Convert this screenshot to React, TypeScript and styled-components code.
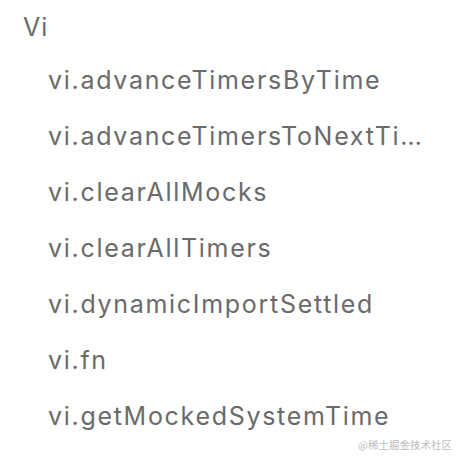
import styled, { createGlobalStyle } from 'styled-components';

const GlobalStyle = createGlobalStyle`
  html, body {
    margin: 0;
    padding: 0;
    background: #ffffff;
  }
  body {
    width: 464px;
    height: 456px;
    overflow: hidden;
    font-family: Inter, "Noto Sans", sans-serif;
    -webkit-font-smoothing: antialiased;
  }
`;

const Page = styled.div`
  position: relative;
  width: 464px;
  height: 456px;
  box-sizing: border-box;
  padding: 10px 0 0 23px;
`;

const Heading = styled.div`
  color: #6a6a6a;
  font-size: 25px;
  line-height: 34px;
  letter-spacing: 1px;
  font-weight: 400;
`;

const List = styled.ul`
  list-style: none;
  margin: 8px 0 0;
  padding: 0 0 0 25px;
  width: 378px;
`;

const Item = styled.li`
  color: #6a6a6a;
  font-size: 25px;
  line-height: 56px;
  letter-spacing: 1.7px;
  white-space: nowrap;
  overflow: hidden;
  text-overflow: ellipsis;
`;

const Watermark = styled.div`
  position: absolute;
  right: 12px;
  bottom: 4px;
  color: #bdbdbd;
  font-size: 10.5px;
  font-family: "Noto Sans CJK SC", sans-serif;
`;

const items = [
  'vi.advanceTimersByTime',
  'vi.advanceTimersToNextTimer',
  'vi.clearAllMocks',
  'vi.clearAllTimers',
  'vi.dynamicImportSettled',
  'vi.fn',
  'vi.getMockedSystemTime',
];

export default function App() {
  return (
    <>
      <GlobalStyle />
      <Page>
        <Heading>Vi</Heading>
        <List>
          {items.map((name) => (
            <Item key={name}>{name}</Item>
          ))}
        </List>
        <Watermark>@稀土掘金技术社区</Watermark>
      </Page>
    </>
  );
}
